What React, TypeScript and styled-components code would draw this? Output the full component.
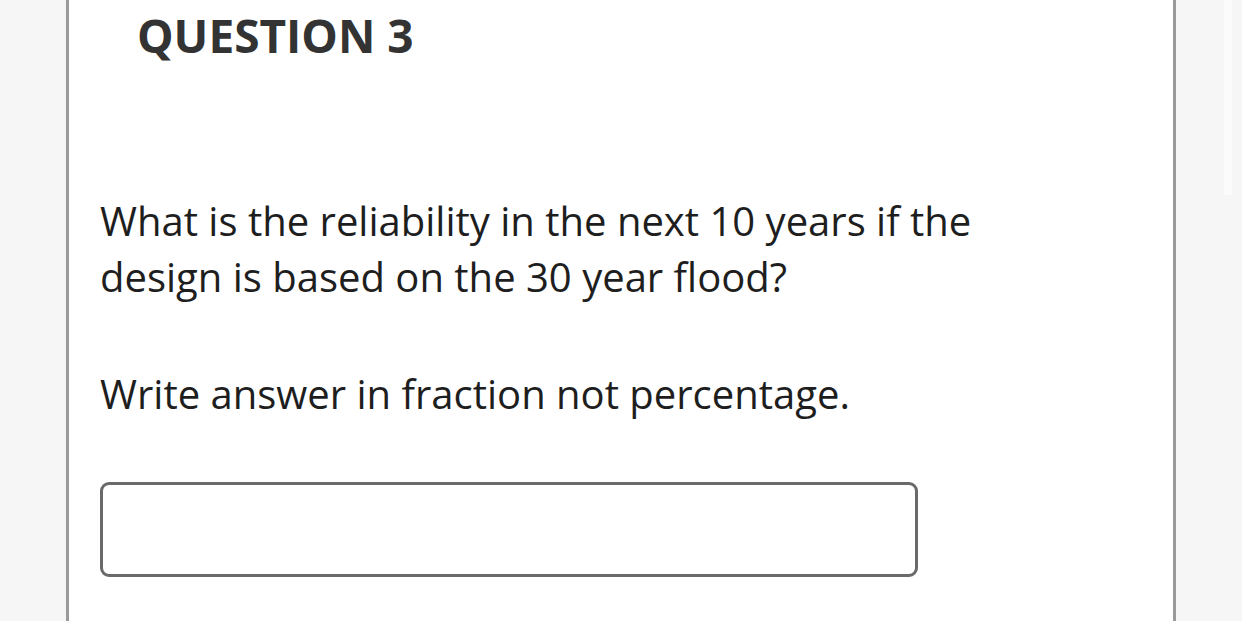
import React from 'react';
import styled, { createGlobalStyle } from 'styled-components';

const GlobalStyle = createGlobalStyle`
  html, body {
    margin: 0;
    padding: 0;
    background: #f6f6f6;
    overflow: hidden;
  }
  body {
    font-family: "Open Sans", "Noto Sans", sans-serif;
  }
`;

const Page = styled.div`
  display: flex;
  height: 621px;
  width: 1242px;
`;

const Gutter = styled.div<{ $width: number }>`
  width: ${p => p.$width}px;
  flex-shrink: 0;
  display: flex;
  justify-content: flex-end;
  padding-right: 10px;
  box-sizing: border-box;
`;

const Strip = styled.div`
  width: 8px;
  height: 195px;
  background: #fbfbfb;
`;

const Card = styled.main`
  width: 1110px;
  flex-shrink: 0;
  background: #fff;
  border-left: 3px solid #9a9a9a;
  border-right: 3px solid #9a9a9a;
  box-sizing: border-box;
  color: #222;
`;

const Heading = styled.h2`
  margin: 0;
  padding: 3px 0 0 68px;
  font-size: 46px;
  font-weight: 700;
  color: #333;
  line-height: 64px;
`;

const Prompt = styled.p`
  margin: 0;
  padding-left: 31px;
  font-size: 40px;
  line-height: 56px;
  color: #1e1e1e;
`;

const Question = styled(Prompt)`
  width: 900px;
  margin-top: 126px;
`;

const Note = styled(Prompt)`
  margin-top: 61px;
`;

const AnswerInput = styled.input`
  display: block;
  margin: 60px 0 0 31px;
  width: 818px;
  height: 95px;
  box-sizing: border-box;
  border: 3px solid #6a6a6a;
  border-radius: 9px;
  background: #fff;
  font-family: inherit;
  font-size: 32px;
  padding: 0 16px;
  outline: none;
`;

export default function App() {
  return (
    <>
      <GlobalStyle />
      <Page>
        <Gutter $width={66} />
        <Card>
          <Heading>QUESTION 3</Heading>
          <Question>
            What is the reliability in the next 10 years if the design is based on the 30 year flood?
          </Question>
          <Note>Write answer in fraction not percentage.</Note>
          <AnswerInput type="text" aria-label="Answer" />
        </Card>
        <Gutter $width={66}>
          <Strip />
        </Gutter>
      </Page>
    </>
  );
}
